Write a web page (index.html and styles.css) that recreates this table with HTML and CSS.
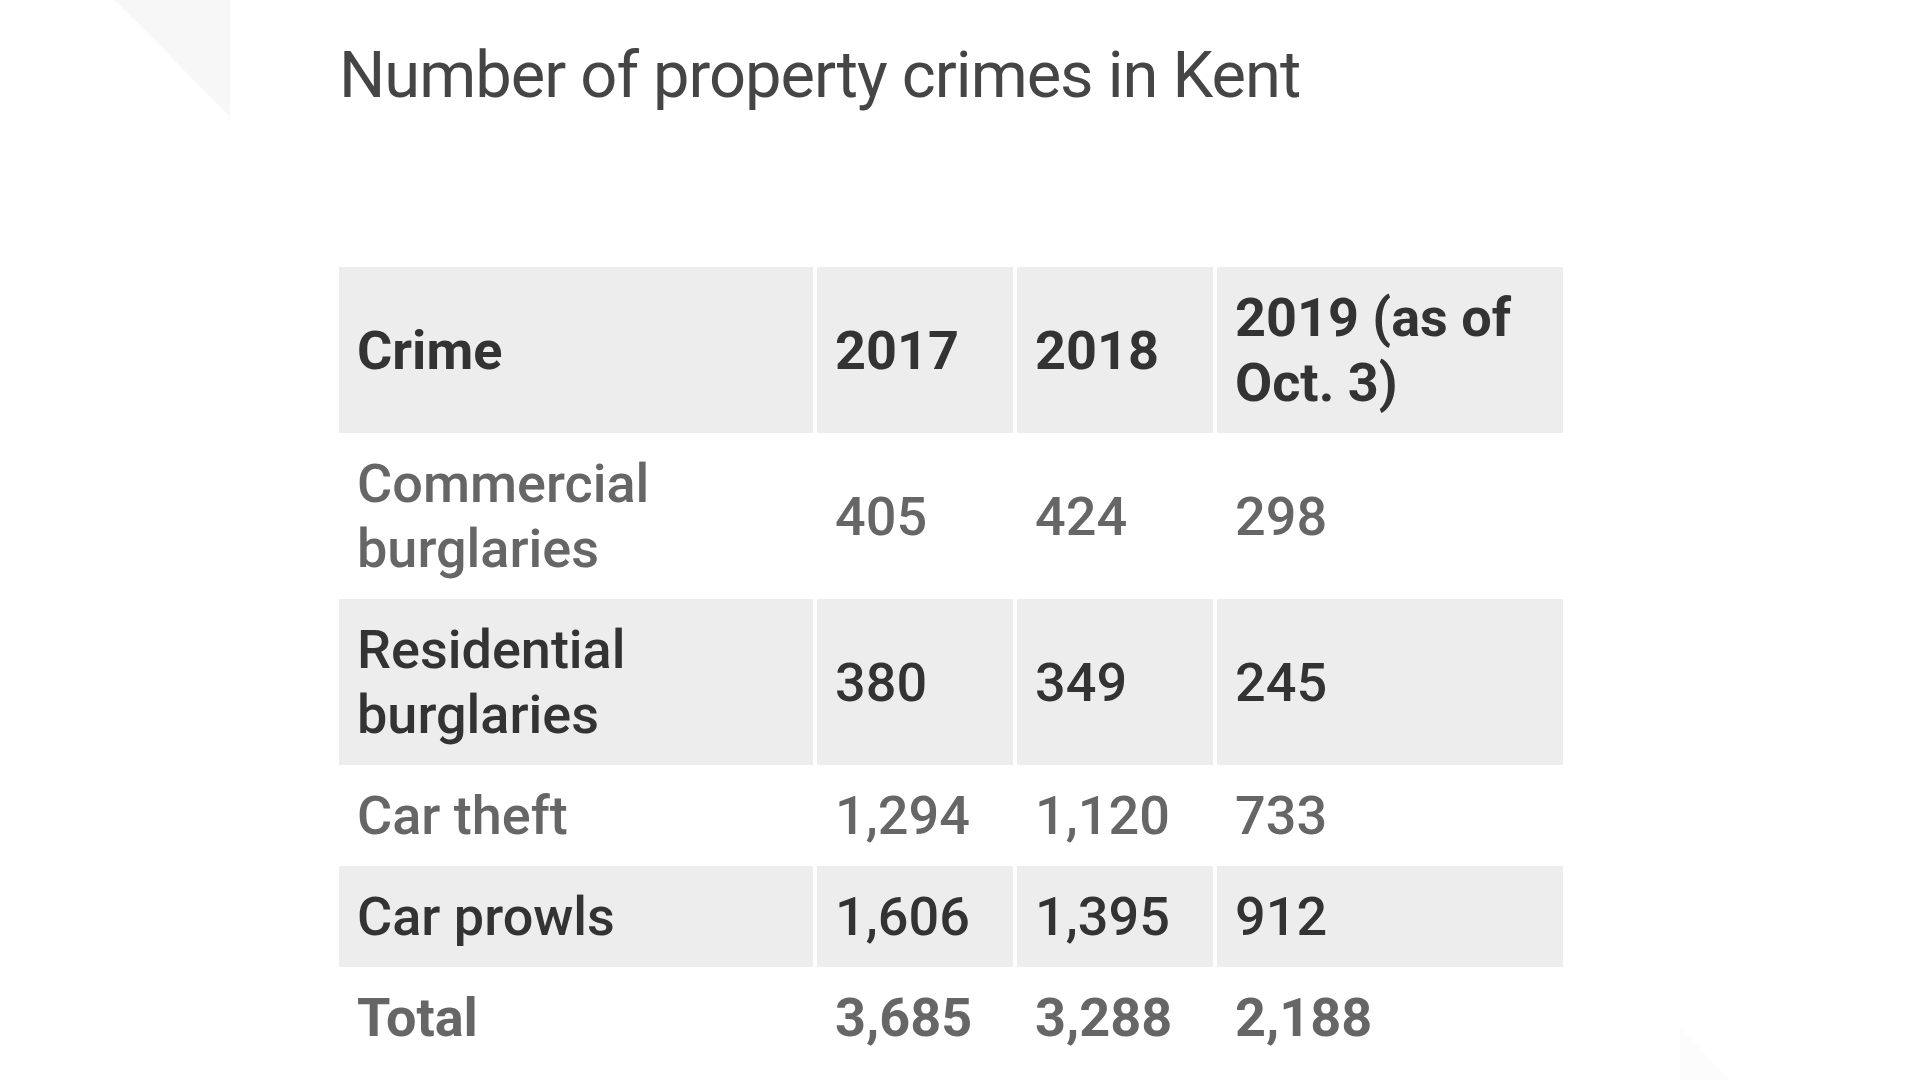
FILE: index.html
```html
<!DOCTYPE html>
<html lang="en">
<head>
<meta charset="utf-8">
<title>Number of property crimes in Kent</title>
<link rel="stylesheet" href="styles.css">
</head>
<body>
<div class="deco deco-top"></div>
<div class="deco deco-bottom"></div>
<main class="content">
  <h1 class="title">Number of property crimes in Kent</h1>
  <table class="crimes">
    <colgroup>
      <col class="c-name">
      <col class="c-year">
      <col class="c-year">
      <col class="c-last">
    </colgroup>
    <thead>
      <tr class="shade">
        <th>Crime</th>
        <th>2017</th>
        <th>2018</th>
        <th>2019 (as of Oct. 3)</th>
      </tr>
    </thead>
    <tbody>
      <tr class="plain">
        <td>Commercial burglaries</td>
        <td>405</td>
        <td>424</td>
        <td>298</td>
      </tr>
      <tr class="shade">
        <td>Residential burglaries</td>
        <td>380</td>
        <td>349</td>
        <td>245</td>
      </tr>
      <tr class="plain">
        <td>Car theft</td>
        <td>1,294</td>
        <td>1,120</td>
        <td>733</td>
      </tr>
      <tr class="shade">
        <td>Car prowls</td>
        <td>1,606</td>
        <td>1,395</td>
        <td>912</td>
      </tr>
      <tr class="plain total">
        <td>Total</td>
        <td>3,685</td>
        <td>3,288</td>
        <td>2,188</td>
      </tr>
    </tbody>
  </table>
</main>
</body>
</html>
```
FILE: styles.css
```css
html, body {
  margin: 0;
  padding: 0;
  background: #ffffff;
}

body {
  font-family: Roboto, "Noto Sans", "Liberation Sans", sans-serif;
  width: 1920px;
  height: 1080px;
  overflow: hidden;
  position: relative;
}

.deco {
  position: absolute;
  pointer-events: none;
}

.deco-top {
  left: 115px;
  top: 0;
  width: 115px;
  height: 117px;
  background: #f7f7f7;
  clip-path: polygon(0 0, 100% 0, 100% 100%);
}

.deco-bottom {
  left: 1680px;
  top: 1028px;
  width: 50px;
  height: 52px;
  background: #fcfcfc;
  clip-path: polygon(0 0, 100% 100%, 0 100%);
}

.content {
  padding: 36px 0 0 339px;
  position: relative;
}

.title {
  margin: 0;
  font-size: 65px;
  line-height: 78px;
  font-weight: 400;
  letter-spacing: -1px;
  color: #454545;
}

.crimes {
  margin: 153px 0 0 -4px;
  border-collapse: separate;
  border-spacing: 4px 0;
  table-layout: fixed;
  width: 1231px;
}

.c-name { width: 474px; }
.c-year { width: 196px; }
.c-last { width: 346px; }

.crimes th,
.crimes td {
  padding: 18px 18px;
  font-size: 54px;
  line-height: 65px;
  text-align: left;
  vertical-align: middle;
}

.crimes th {
  font-weight: 700;
  color: #333333;
}

.crimes td {
  font-weight: 500;
}

.shade th,
.shade td {
  background: #ededed;
  color: #333333;
}

.plain td {
  background: #ffffff;
  color: #666666;
}

.total td {
  font-weight: 700;
}
```
